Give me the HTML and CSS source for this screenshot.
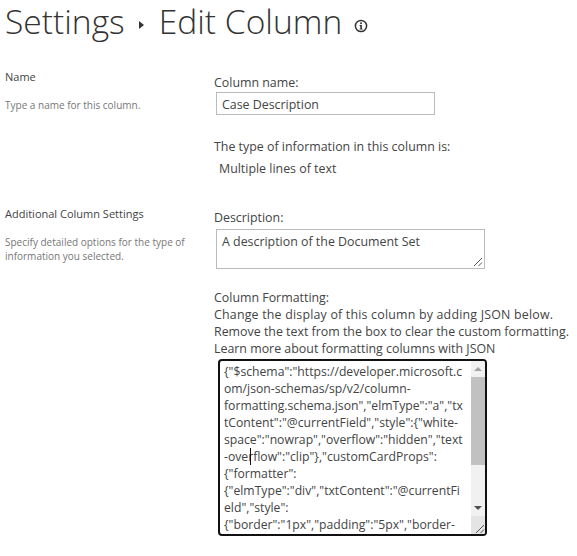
FILE: index.html
```html
<!DOCTYPE html>
<html lang="en">
<head>
    <meta charset="UTF-8">
    <title>Edit Column</title>
    <link rel="stylesheet" href="styles.css">
</head>
<body>
    <div class="page-title">
        <span>Settings</span>
        <span class="crumb-arrow"></span>
        <span>Edit Column</span>
        <svg class="info-icon" width="14" height="14" viewBox="0 0 14 14">
            <circle cx="7" cy="7" r="5.6" fill="none" stroke="#333" stroke-width="1.5"/>
            <rect x="6.2" y="3.4" width="1.7" height="1.7" fill="#333"/>
            <path d="M5.6 6.1H7.9V9.7H8.7V10.6H5.5V9.7H6.3V7H5.6Z" fill="#333"/>
        </svg>
    </div>

    <div class="section section-name">
        <div class="side">
            <h3>Name</h3>
            <p>Type a name for this column.</p>
        </div>
        <div class="main">
            <label>Column name:</label>
            <div class="text-input">Case Description</div>
            <div class="type-label">The type of information in this column is:</div>
            <div class="type-value">Multiple lines of text</div>
        </div>
    </div>

    <div class="section section-extra">
        <div class="side">
            <h3>Additional Column Settings</h3>
            <p>Specify detailed options for the type of information you selected.</p>
        </div>
        <div class="main">
            <label>Description:</label>
            <div class="text-area">
                A description of the Document Set
                <svg class="grip" width="11" height="11" viewBox="0 0 11 11">
                    <path d="M2 10L10 2M6.5 10L10 6.5" stroke="#555" stroke-width="1"/>
                </svg>
            </div>
            <div class="format-help">
                Column Formatting:<br>
                <span class="wide-line">Change the display of this column by adding JSON below.</span><br>
                Remove the text from the box to clear the custom formatting.<br>
                Learn more about formatting columns with JSON
            </div>
            <div class="json-box">
                <div class="json-text">{"$schema":"https://developer.microsoft.c<br>om/json-schemas/sp/v2/column-<br>formatting.schema.json","elmType":"a","tx<br>tContent":"@currentField","style":{"white-<br>space":"nowrap","overflow":"hidden","text<br>-overflow":"clip"},"customCardProps":<br>{"formatter":<br>{"elmType":"div","txtContent":"@currentFi<br>eld","style":<br>{"border":"1px","padding":"5px","border-</div>
                <span class="caret"></span>
                <div class="scrollbar">
                    <div class="arrow-up"></div>
                    <div class="thumb"></div>
                    <div class="track"></div>
                    <div class="arrow-down"></div>
                    <div class="corner">
                        <svg width="11" height="11" viewBox="0 0 11 11">
                            <path d="M2 10L10 2M6.5 10L10 6.5" stroke="#555" stroke-width="1"/>
                        </svg>
                    </div>
                </div>
            </div>
        </div>
    </div>
</body>
</html>
```

FILE: styles.css
```css
html, body {
    height: 556px;
    overflow: hidden;
}
body {
    margin: 0;
    background-color: #fff;
    color: #444;
    font-family: "Open Sans", "Noto Sans", sans-serif;
    font-size: 12.4px;
}
.page-title {
    display: flex;
    align-items: center;
    height: 42px;
    padding-left: 5px;
    font-size: 33.6px;
    font-weight: 300;
    line-height: 42px;
    color: #333;
}
.crumb-arrow {
    width: 0;
    height: 0;
    margin: 8px 15px 0 14px;
    border-left: 5px solid #333;
    border-top: 4px solid transparent;
    border-bottom: 4px solid transparent;
}
.info-icon {
    margin: 9px 0 0 12px;
}
.section {
    display: grid;
    grid-template-columns: 209px 1fr;
    padding-left: 5px;
}
.section-name {
    padding-top: 27px;
}
.section-extra {
    padding-top: 29px;
}
.section-extra .main label {
    margin-top: 3px;
}
.side h3 {
    margin: 0;
    font-size: 11px;
    font-weight: 400;
    line-height: 15px;
    color: #444;
}
.side p {
    margin: 14px 0 0;
    width: 190px;
    font-size: 10px;
    line-height: 14px;
    color: #777;
}
.main label {
    display: block;
    line-height: 17px;
    margin-top: 5px;
}
.text-input {
    width: 212px;
    height: 21px;
    margin: 1px 0 0 2px;
    padding-left: 5px;
    border: 1px solid #bbb;
    line-height: 23px;
}
.type-label {
    margin-top: 23px;
    line-height: 17px;
}
.type-value {
    margin: 5px 0 0 5px;
    line-height: 17px;
}
.text-area {
    position: relative;
    box-sizing: border-box;
    width: 269px;
    height: 40px;
    margin: 3px 0 0 2px;
    padding: 3px 5px;
    border: 1px solid #bbb;
    line-height: 17px;
}
.grip {
    position: absolute;
    right: 1px;
    bottom: 1px;
}
.format-help {
    margin-top: 20px;
    line-height: 17px;
}
.wide-line {
    letter-spacing: 0.2px;
}
.json-box {
    position: relative;
    display: flex;
    box-sizing: border-box;
    width: 269px;
    height: 177px;
    margin: 2px 0 0 4px;
    border: 2px solid #111;
    border-radius: 4px;
    overflow: hidden;
}
.json-text {
    flex: 1;
    padding: 2px 0 0 4px;
    line-height: 17px;
    font-size: 12.2px;
    white-space: nowrap;
    overflow: hidden;
}
.caret {
    position: absolute;
    left: 30px;
    top: 87px;
    width: 1px;
    height: 17px;
    background-color: #111;
}
.scrollbar {
    display: flex;
    flex-direction: column;
    width: 14px;
    background-color: #f1f1f1;
}
.arrow-up, .arrow-down {
    width: 0;
    height: 0;
    margin: 6px auto;
    border-left: 4px solid transparent;
    border-right: 4px solid transparent;
}
.arrow-up {
    border-bottom: 4px solid #a3a3a3;
}
.arrow-down {
    border-top: 4px solid #505050;
}
.thumb {
    height: 88px;
    background-color: #c1c1c1;
}
.track {
    flex: 1;
}
.corner {
    display: flex;
    justify-content: flex-end;
    align-items: flex-end;
    height: 18px;
    background-color: #e4e4e4;
}
```
